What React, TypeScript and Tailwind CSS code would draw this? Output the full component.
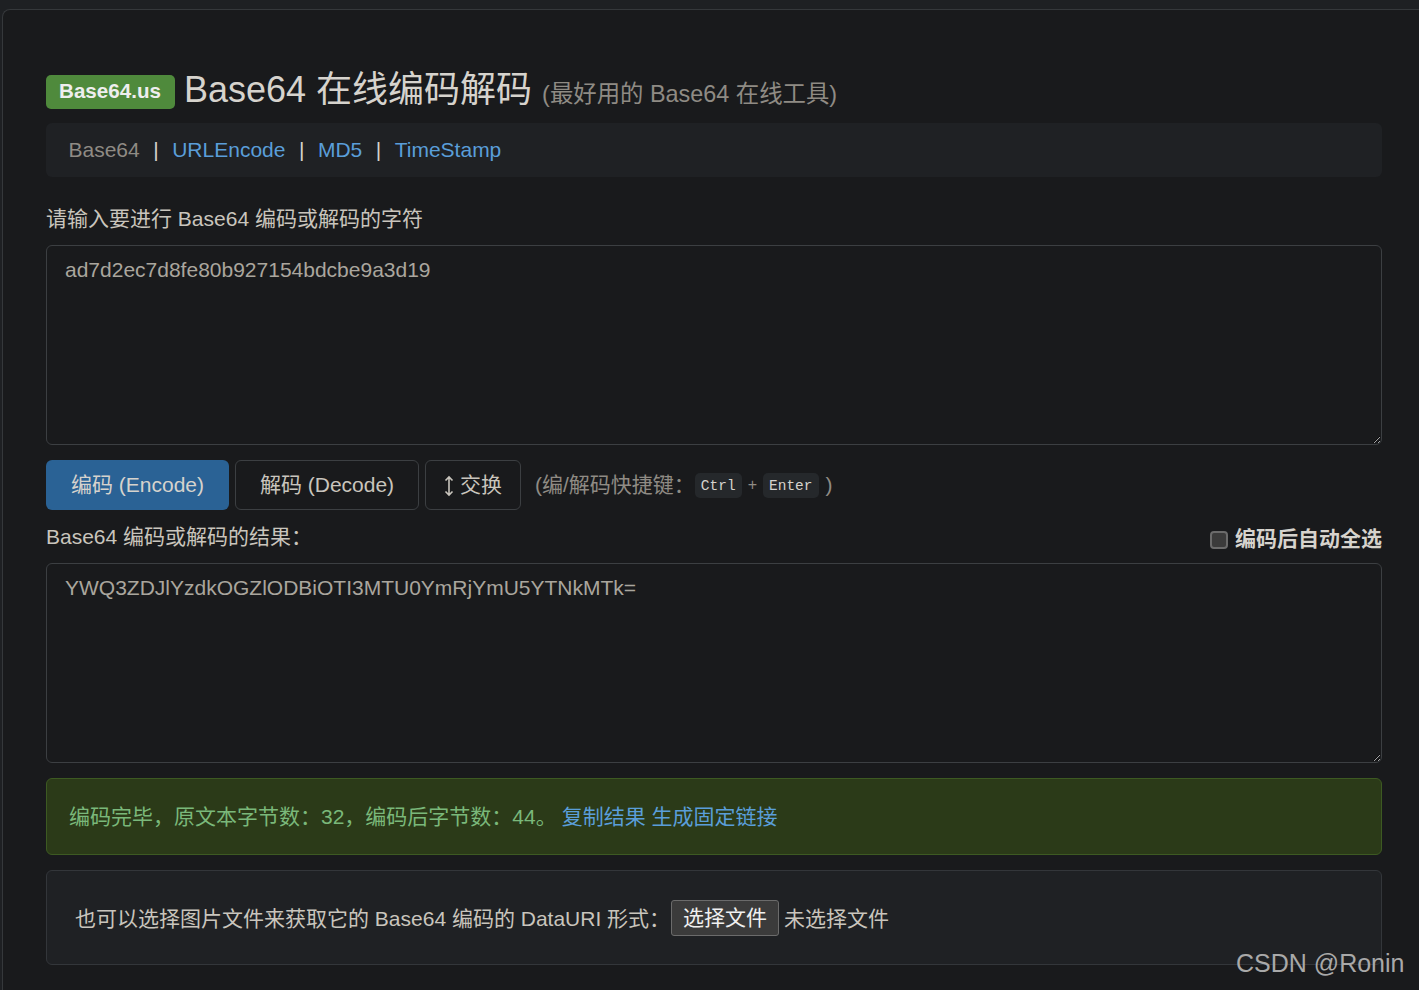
import React from "react";

const font = { fontFamily: '"Liberation Sans", "Noto Sans CJK SC", sans-serif' };

function Sep() {
  return <span className="mx-[13.5px] text-[#d6d3cd]">|</span>;
}

function Kbd({ children }: { children: React.ReactNode }) {
  return (
    <kbd className="inline-flex h-[25px] items-center rounded-[5px] bg-[#25282b] px-[6px] pt-[3px] font-['Liberation_Mono','DejaVu_Sans_Mono',monospace] text-[14.5px] font-normal text-[#d6d3cd]">
      {children}
    </kbd>
  );
}

export default function App() {
  return (
    <div
      style={font}
      className="relative h-[990px] w-[1419px] overflow-hidden bg-[#1e2023] pl-[2px] pt-[9px] text-[21px] text-[#c9c5bd] [color-scheme:dark]"
    >
      <div className="h-[981px] rounded-tl-lg border-l border-t border-[#35383b] bg-[#191a1c] pl-[43px] pr-[37px] pt-[52px]">
        <h1 className="-ml-px flex h-[61px] items-center text-[36px] font-normal leading-none text-[#d6d3cd]">
          <span className="ml-px mr-[9px] mt-[-1px] flex h-[34px] w-[129px] items-center justify-center rounded-[5px] bg-[#4f8a3c] pb-[2px] pr-px text-[20.6px] font-bold text-[#eeeeee]">
            Base64.us
          </span>
          <span className="mt-[-6px]">Base64 在线编码解码</span>
          <span className="ml-[10px] mt-[4px] text-[23.4px] text-[#8f8b84]">(最好用的 Base64 在线工具)</span>
        </h1>

        <nav className="flex h-[54px] items-center rounded-[6px] bg-[#1f2124] pl-[22.5px] text-[21px]">
          <span className="text-[#8f8b84]">Base64</span>
          <Sep />
          <a className="text-[#5a9ed9]">URLEncode</a>
          <Sep />
          <a className="text-[#5a9ed9]">MD5</a>
          <Sep />
          <a className="text-[#5a9ed9]">TimeStamp</a>
        </nav>

        <label className="mb-[10px] mt-[26px] block h-[32px] leading-[32px]">请输入要进行 Base64 编码或解码的字符</label>
        <textarea
          readOnly
          defaultValue="ad7d2ec7d8fe80b927154bdcbe9a3d19"
          className="block h-[200px] w-full resize-y rounded-[6px] border border-[#3c3f42] bg-[#191a1c] px-[18px] py-[9px] text-[21px] leading-[30px] text-[#aaa69e] outline-none"
        />

        <div className="mt-[15px] flex h-[50px] items-center">
          <button className="h-full w-[183px] rounded-[6px] bg-[#2a6295] text-[#d6d3cd]">编码 (Encode)</button>
          <button className="ml-[6px] h-full w-[184px] rounded-[6px] border border-[#3c3f42] text-[#c9c5bd]">解码 (Decode)</button>
          <button className="ml-[6px] flex h-full w-[96px] items-center justify-center rounded-[6px] border border-[#3c3f42] text-[#c9c5bd]">
            <svg width="10" height="22" viewBox="0 0 10 22" fill="none" stroke="#c9c5bd" strokeWidth="1.6" className="mr-[6px] mt-[2px]">
              <path d="M5 2v18M1.5 5.5 5 2l3.5 3.5M1.5 16.5 5 20l3.5-3.5" />
            </svg>
            交换
          </button>
          <span className="ml-[14px] flex items-center text-[#8f8b84]">
            (编/解码快捷键：
            <Kbd>Ctrl</Kbd>
            <span className="mx-[6px] text-[16px]">+</span>
            <Kbd>Enter</Kbd>
            <span className="ml-[7px]">)</span>
          </span>
        </div>

        <div className="mb-[9px] mt-[11px] flex h-[33px] items-center justify-between">
          <span className="mt-[-2px]">Base64 编码或解码的结果：</span>
          <label className="mt-[3px] flex items-center font-bold text-[#d6d3cd]">
            <span className="mr-[7px] mt-[2px] h-[18px] w-[18px] rounded-[4px] border-2 border-[#6b6b6b] bg-[#3b3b3b]" />
            编码后自动全选
          </label>
        </div>
        <textarea
          readOnly
          defaultValue="YWQ3ZDJlYzdkOGZlODBiOTI3MTU0YmRjYmU5YTNkMTk="
          className="block h-[200px] w-full resize-y rounded-[6px] border border-[#3c3f42] bg-[#191a1c] px-[18px] py-[9px] text-[21px] leading-[30px] text-[#aaa69e] outline-none"
        />

        <div className="mt-[15px] flex h-[77px] items-center rounded-[6px] border border-[#3d5a22] bg-[#2b3a18] pl-[22px] text-[#7ab87a]">
          <span>编码完毕，原文本字节数：32，编码后字节数：44。</span>
          <a className="ml-[5px] text-[#5a9ed9]">复制结果 生成固定链接</a>
        </div>

        <div className="mt-[15px] flex h-[95px] items-center rounded-[6px] border border-[#33363a] bg-[#1f2124] pl-[28px] pt-[2px] text-[#c9c5bd]">
          <span>也可以选择图片文件来获取它的 Base64 编码的 DataURI 形式：</span>
          <button className="ml-[1px] mt-[-2px] h-[36px] w-[108px] rounded-[3px] border border-[#6b6b6b] bg-[#3b3b3b] text-[#f0f0f0]">选择文件</button>
          <span className="ml-[5px]">未选择文件</span>
        </div>
      </div>

      <div className="absolute left-[1236px] top-[947px] text-[25px] leading-[32px] text-[#a9a9a9]">CSDN @Ronin</div>
    </div>
  );
}
